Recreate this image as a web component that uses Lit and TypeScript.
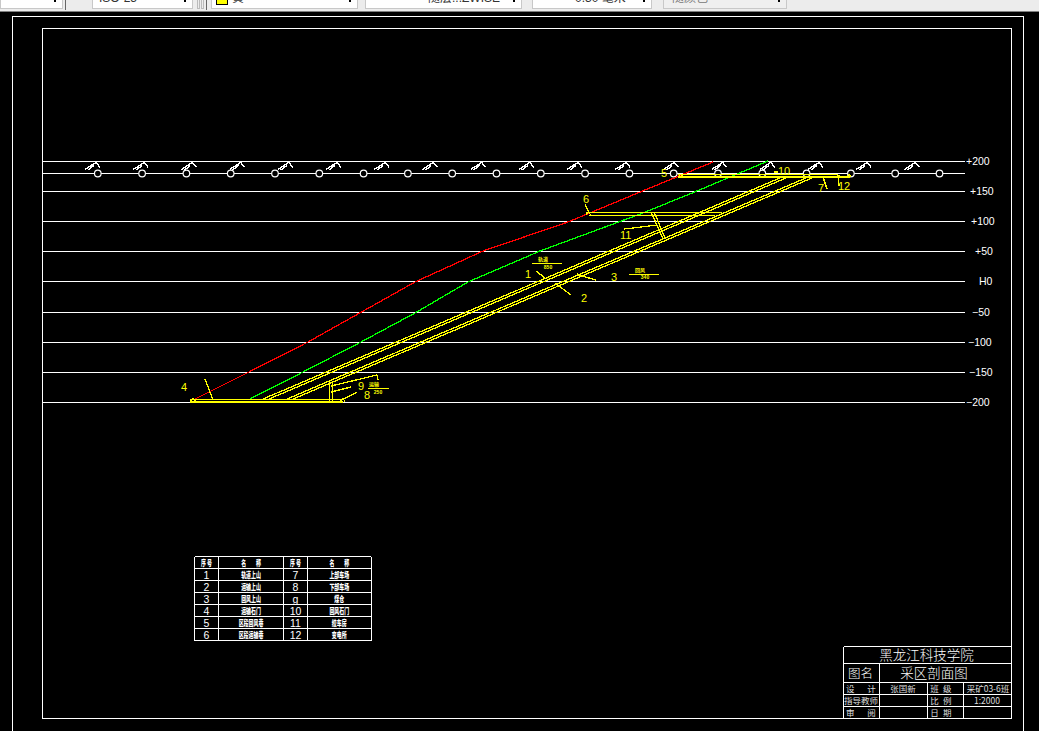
import { LitElement, html, svg, css } from "lit";
import { customElement } from "lit/decorators.js";

type Seg = [number, number, number, number];
type Pts = [number, number][];

const LEVELS: [number, string, number][] = [
  [161.5, "+200", 966],
  [173.5, "", 0],
  [191.5, "+150", 970],
  [221.5, "+100", 971],
  [251.5, "+50", 975],
  [281.5, "H0", 979],
  [312.5, "−50", 972],
  [342.5, "−100", 968],
  [372.5, "−150", 969],
  [402.5, "−200", 966],
];

const CIRCLES = Array.from({ length: 20 }, (_, i) => 97.8 + i * 44.3);
const HATCHES = Array.from({ length: 18 }, (_, i) => 92 + i * 48.2);

const RED: Pts = [[195, 399], [249, 372], [308, 342], [415, 282], [483, 251], [568, 222], [645, 190], [713, 162]];
const GREEN: Pts = [[250, 399], [303, 372], [361, 342], [415, 313], [468, 282], [540, 251], [643, 213], [697, 191], [768, 161]];

const YELLOW: Seg[] = [
  // inclines
  [263, 399, 780, 178], [269, 399, 786, 178],
  [287, 399, 806, 178], [293, 399, 812, 178],
  // top level
  [678, 177, 850, 177],
  // middle level
  [586, 212.5, 722, 212.5], [589, 215.5, 715, 215.5],
  // connector
  [651.5, 213, 663, 239], [654.5, 213, 665.5, 239],
  // bottom level
  [190, 399.5, 343, 399.5], [190, 402, 343, 402],
  [329.5, 381, 329.5, 402], [332.5, 381, 332.5, 402],
  // end trapezoids
  [190, 402, 193, 398], [193, 398, 196, 402], [340, 402, 343, 398], [343, 398, 345, 402],
  [678, 177, 681, 174], [681, 174, 683, 177], [846, 177, 849, 174], [849, 174, 851, 177],
  [586, 215, 588, 212], [588, 212, 591, 215],
  // leaders
  [205, 379, 213, 400],
  [331, 386, 377, 375], [377, 375, 378, 380], [331, 392, 351, 387], [342, 400, 357, 392],
  [536, 271, 545, 278], [555, 283, 571, 295], [577, 274, 582, 276], [582, 276, 596, 280],
  [624, 229, 633, 228], [633, 228, 657, 225],
  [585, 204, 589, 213],
  [823, 177, 827, 189], [838, 175, 839, 186], [838, 175, 841, 177], [774, 172, 778, 172],
  // fraction bars
  [532, 263.5, 562, 263.5], [629, 274.5, 659, 274.5], [368, 388.5, 389, 388.5],
];

const LABELS: [number, number, string][] = [
  [181, 391, "4"], [661, 177, "5"], [583, 203, "6"], [818, 192, "7"], [364, 399, "8"], [358, 390, "9"],
  [778, 175, "10"], [620, 239, "11"], [838, 190, "12"], [525, 278, "1"], [581, 302, "2"], [611, 281, "3"],
];

const TINY: [number, number, string][] = [
  [543, 261, "轨道"], [548, 269, "850"], [640, 272, "回风"], [645, 279, "340"], [374, 386, "运输"], [378, 394, "250"],
];

const TABLE_X = [194.5, 218.5, 283.5, 307.5, 371];
const TABLE_Y = [556.5, 568.5, 580.5, 592.5, 604.5, 616.5, 628.5, 640.5];
const TABLE_ROWS: string[][] = [
  ["序 号", "名　　称", "序 号", "名　　称"],
  ["1", "轨道上山", "7", "上部车场"],
  ["2", "运输上山", "8", "下部车场"],
  ["3", "回风上山", "g", "煤仓"],
  ["4", "运输石门", "10", "回风石门"],
  ["5", "区段回风巷", "11", "绞车房"],
  ["6", "区段运输巷", "12", "变电所"],
];

const TITLE_LINES: Seg[] = [
  [843.5, 646.5, 1011, 646.5], [843.5, 663.5, 1011, 663.5], [843.5, 682.5, 1011, 682.5],
  [843.5, 694.5, 1011, 694.5], [843.5, 706.5, 1011, 706.5],
  [843.5, 646.5, 843.5, 718.5], [879.5, 663.5, 879.5, 718.5], [927.5, 682.5, 927.5, 718.5], [963.5, 682.5, 963.5, 718.5],
];

const TITLE_SMALL: [number, number, string][] = [
  [861, 692, "设\u3000\u2002计"], [903, 692, "张国新"], [941, 692, "班\u2002级"], [988, 692, "采矿03-6班"],
  [861, 704, "指导教师"], [941, 704, "比\u2002例"], [987, 704, "1:2000"],
  [861, 716, "审\u3000\u2002阅"], [941, 716, "日\u2002期"],
];

const line = ([a, b, c, d]: Seg, cls: string) =>
  svg`<line class=${cls} x1=${a} y1=${b} x2=${c} y2=${d}></line>`;
const poly = (p: Pts, cls: string) =>
  svg`<polyline class=${cls} points=${p.map((q) => q.join(",")).join(" ")}></polyline>`;

@customElement("app-root")
export class AppRoot extends LitElement {
  static styles = css`
    :host {
      display: block;
      width: 1039px;
      height: 731px;
      overflow: hidden;
      background: #000;
      font-family: "Liberation Sans", "Noto Sans CJK SC", sans-serif;
    }
    .toolbar {
      display: flex;
      height: 11px;
      background: #ececec;
      border-bottom: 1px solid #808080;
      overflow: hidden;
    }
    .field {
      display: flex;
      align-items: flex-start;
      height: 9px;
      background: #fff;
      border: 1px solid #c8c8c8;
      border-top: 0;
      overflow: hidden;
      font-size: 12px;
      line-height: 12px;
      color: #333;
      box-sizing: border-box;
      flex: none;
    }
    .field.off { background: #efefef; color: #777; }
    .field span { margin-top: -8px; white-space: pre; }
    .arrow {
      margin-left: auto;
      margin-right: 6px;
      width: 2px;
      height: 2px;
      background: #000;
      flex: none;
    }
    .sep { flex: none; width: 1px; height: 10px; background: #666; }
    .grip { flex: none; width: 3px; height: 9px; border: 1px solid #bbb; border-top: 0; box-sizing: border-box; }
    .swatch { flex: none; width: 10px; height: 4px; margin: 0 4px; background: #ff0; border: 1px solid #000; border-top: 0; }
    .f1 { width: 63px; }
    .f2 { width: 101px; margin-left: 7px; padding-left: 6px; }
    .f3 { width: 147px; margin-left: 4px; }
    .f4 { width: 157px; margin-left: 7px; padding-left: 62px; }
    .f5 { width: 120px; margin-left: 10px; padding-left: 42px; }
    .f6 { width: 124px; margin-left: 11px; padding-left: 8px; }
    .s1 { margin-left: 2px; }
    .s2 { margin-left: 2px; }
    .g1 { margin-left: 4px; }
    .g2 { margin-left: 1px; }
    .tbicon { flex: none; margin-left: 6px; display: block; }
    svg.cad { display: block; width: 1039px; height: 719px; background: #000; }
    line, polyline, rect, circle { shape-rendering: crispEdges; fill: none; }
    .w { stroke: #fff; stroke-width: 1; }
    .wd { stroke: #fff; stroke-width: 1.4; }
    .y { stroke: #ff0; stroke-width: 1.3; }
    .yy { stroke: #ff0; stroke-width: 1.5; }
    .r { stroke: #f00; stroke-width: 1.3; }
    .g { stroke: #0f0; stroke-width: 1.3; }
    circle.w { fill: #000; shape-rendering: auto; stroke-width: 1.2; }
    text { font-family: "Liberation Sans", "Noto Sans CJK SC", sans-serif; }
    .lv { fill: #fff; font-size: 10.5px; }
    .lb { fill: #ff0; font-size: 11px; }
    .ty { fill: #ff0; font-size: 5px; font-weight: 700; text-anchor: middle; }
    .tn { fill: #fff; font-size: 10.5px; text-anchor: middle; }
    .tc { fill: #fff; font-size: 8.5px; font-weight: 900; text-anchor: middle; font-family: "Noto Sans CJK SC", sans-serif; }
    .t1 { fill: #fff; font-size: 13.5px; text-anchor: middle; font-family: "Noto Sans CJK SC", sans-serif; font-weight: 300; }
    .t2 { fill: #fff; font-size: 13.5px; text-anchor: middle; font-family: "Noto Sans CJK SC", sans-serif; font-weight: 300; }
    .t3 { fill: #fff; font-size: 12.5px; text-anchor: middle; font-family: "Noto Sans CJK SC", sans-serif; font-weight: 300; }
    .t4 { fill: #ddd; font-size: 8.5px; text-anchor: middle; font-family: "Noto Sans CJK SC", sans-serif; }
  `;

  private toolbar() {
    return html`<div class="toolbar">
      <div class="field f1"><i class="arrow"></i></div>
      <div class="sep s1"></div>
      <svg class="tbicon" width="13" height="8" viewBox="0 0 13 8">
        <rect width="13" height="8" fill="#5a78b0"></rect>
        <rect x="1" y="3" width="3" height="2" fill="#fff"></rect>
        <rect x="5" y="3" width="3" height="2" fill="#fff"></rect>
        <rect x="9" y="3" width="3" height="2" fill="#fff"></rect>
        <rect x="1" y="6" width="3" height="2" fill="#dfe6f5"></rect>
        <rect x="5" y="6" width="3" height="2" fill="#dfe6f5"></rect>
        <rect x="9" y="6" width="3" height="2" fill="#dfe6f5"></rect>
      </svg>
      <div class="field f2"><span>ISO-25</span><i class="arrow"></i></div>
      <div class="grip g1"></div>
      <div class="grip g2"></div>
      <div class="sep s2"></div>
      <div class="field f3"><i class="swatch"></i><span>黄</span><i class="arrow"></i></div>
      <div class="field f4"><span>随层...ZWISE</span><i class="arrow"></i></div>
      <div class="field f5"><span>0.30 毫米</span><i class="arrow"></i></div>
      <div class="field f6 off"><span>随颜色</span><i class="arrow"></i></div>
    </div>`;
  }

  private hatches() {
    return HATCHES.map((x) => [
      line([x - 7, 169.5, x + 4.7, 162], "wd"),
      line([x - 4, 170, x + 2, 165.5], "wd"),
      line([x + 3.3, 161.5, x + 8, 167.3], "wd"),
    ]);
  }

  private table() {
    const x0 = TABLE_X[0], x1 = TABLE_X[4];
    const y0 = TABLE_Y[0], y1 = TABLE_Y[7];
    return [
      TABLE_Y.map((y) => line([x0, y, x1, y], "w")),
      TABLE_X.map((x) => line([x, y0, x, y1], "w")),
      TABLE_ROWS.map((row, i) =>
        row.map((cell, j) => {
          const cx = (TABLE_X[j] + TABLE_X[j + 1]) / 2;
          const numeric = i > 0 && j % 2 === 0;
          return numeric
            ? svg`<text class="tn" x=${cx} y=${TABLE_Y[i] + 10}>${cell}</text>`
            : svg`<text class="tc" transform="translate(${cx} ${TABLE_Y[i] + 9}) scale(.58 1)">${cell}</text>`;
        })
      ),
    ];
  }

  private titleBlock() {
    return [
      TITLE_LINES.map((s) => line(s, "w")),
      svg`<text class="t1" x="926.5" y="660">黑龙江科技学院</text>`,
      svg`<text class="t3" x="860.5" y="678">图名</text>`,
      svg`<text class="t2" x="934" y="678">采区剖面图</text>`,
      TITLE_SMALL.map(([x, y, s]) => svg`<text class="t4" x=${x} y=${y}>${s}</text>`),
    ];
  }

  render() {
    return html`${this.toolbar()}
      <svg class="cad" viewBox="0 12 1039 719" xmlns="http://www.w3.org/2000/svg">
        <rect class="w" x="12.5" y="16.5" width="1011" height="740"></rect>
        <rect class="w" x="42.5" y="28.5" width="968.5" height="690"></rect>
        ${LEVELS.map(([y, t, x]) => [
          line([42.5, y, 965, y], "w"),
          t ? svg`<text class="lv" x=${x} y=${y + 3}>${t}</text>` : "",
        ])}
        ${this.hatches()}
        ${CIRCLES.map((x) => svg`<circle class="w" cx=${x} cy="173.5" r="3.3"></circle>`)}
        ${poly(RED, "r")} ${poly(GREEN, "g")}
        ${YELLOW.map((s) => line(s, "y"))}
        ${line([678, 174.5, 838, 174.5], "yy")}
        ${LABELS.map(([x, y, t]) => svg`<text class="lb" x=${x} y=${y}>${t}</text>`)}
        ${TINY.map(([x, y, t]) => svg`<text class="ty" x=${x} y=${y}>${t}</text>`)}
        ${this.table()} ${this.titleBlock()}
      </svg>`;
  }
}
